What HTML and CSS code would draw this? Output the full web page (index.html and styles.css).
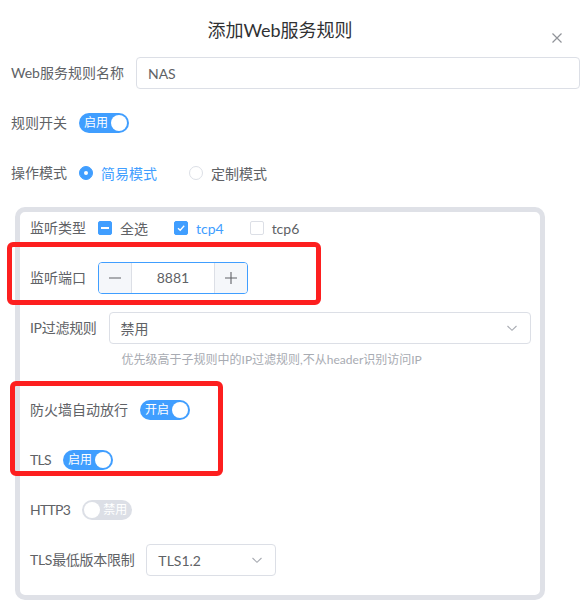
FILE: index.html
```html
<!DOCTYPE html>
<html lang="zh-CN">
<head>
    <meta charset="UTF-8">
    <meta name="viewport" content="width=device-width, initial-scale=1.0">
    <title>添加Web服务规则</title>
    <link rel="stylesheet" href="styles.css">
</head>
<body>
    <div class="dialog">
        <div class="dialog-header">
            <span class="dialog-title">添加Web服务规则</span>
            <button class="dialog-close" type="button" aria-label="关闭">
                <svg width="10" height="10" viewBox="0 0 10 10"><path d="M0.5 0.5L9.5 9.5M9.5 0.5L0.5 9.5" stroke="#909399" stroke-width="1.2" fill="none"/></svg>
            </button>
        </div>

        <form class="form">
            <div class="form-item">
                <label class="form-label">Web服务规则名称</label>
                <div class="form-content">
                    <div class="input"><input type="text" value="NAS"></div>
                </div>
            </div>

            <div class="form-item">
                <label class="form-label">规则开关</label>
                <div class="form-content">
                    <span class="switch is-on"><span class="switch-text">启用</span><span class="switch-knob"></span></span>
                </div>
            </div>

            <div class="form-item">
                <label class="form-label">操作模式</label>
                <div class="form-content">
                    <span class="radio is-checked"><span class="radio-dot"></span><span class="radio-label">简易模式</span></span>
                    <span class="radio"><span class="radio-dot"></span><span class="radio-label">定制模式</span></span>
                </div>
            </div>

            <div class="simple-box">
                <div class="form-item">
                    <label class="form-label">监听类型</label>
                    <div class="form-content">
                        <span class="checkbox is-half"><span class="checkbox-box"></span><span class="checkbox-label">全选</span></span>
                        <span class="checkbox is-checked"><span class="checkbox-box">
                            <svg width="10" height="10" viewBox="0 0 10 10"><path d="M2 5.2L4.2 7.3L8.2 2.8" stroke="#fff" stroke-width="1.3" fill="none"/></svg>
                        </span><span class="checkbox-label">tcp4</span></span>
                        <span class="checkbox"><span class="checkbox-box"></span><span class="checkbox-label">tcp6</span></span>
                    </div>
                </div>

                <div class="form-item">
                    <label class="form-label">监听端口</label>
                    <div class="form-content">
                        <div class="number-input">
                            <span class="number-btn minus">
                                <svg width="12" height="12" viewBox="0 0 12 12"><path d="M0 6H12" stroke="#606266" stroke-width="1.1"/></svg>
                            </span>
                            <span class="number-value">8881</span>
                            <span class="number-btn plus">
                                <svg width="12" height="12" viewBox="0 0 12 12"><path d="M0 6H12M6 0V12" stroke="#606266" stroke-width="1.1"/></svg>
                            </span>
                        </div>
                    </div>
                </div>

                <div class="form-item has-tip">
                    <label class="form-label mixed">IP过滤规则</label>
                    <div class="form-content column">
                        <div class="select wide">
                            <span class="select-value">禁用</span>
                            <svg class="select-arrow" width="12" height="12" viewBox="0 0 12 12"><path d="M1.5 4L6 8.3L10.5 4" stroke="#a8abb2" stroke-width="1.1" fill="none"/></svg>
                        </div>
                        <div class="form-tip">优先级高于子规则中的IP过滤规则,不从header识别访问IP</div>
                    </div>
                </div>

                <div class="form-item">
                    <label class="form-label">防火墙自动放行</label>
                    <div class="form-content">
                        <span class="switch is-on"><span class="switch-text">开启</span><span class="switch-knob"></span></span>
                    </div>
                </div>

                <div class="form-item">
                    <label class="form-label latin">TLS</label>
                    <div class="form-content">
                        <span class="switch is-on"><span class="switch-text">启用</span><span class="switch-knob"></span></span>
                    </div>
                </div>

                <div class="form-item">
                    <label class="form-label latin">HTTP3</label>
                    <div class="form-content">
                        <span class="switch"><span class="switch-text">禁用</span><span class="switch-knob"></span></span>
                    </div>
                </div>

                <div class="form-item">
                    <label class="form-label mixed">TLS最低版本限制</label>
                    <div class="form-content">
                        <div class="select small">
                            <span class="select-value">TLS1.2</span>
                            <svg class="select-arrow" width="12" height="12" viewBox="0 0 12 12"><path d="M1.5 4L6 8.3L10.5 4" stroke="#a8abb2" stroke-width="1.1" fill="none"/></svg>
                        </div>
                    </div>
                </div>
            </div>
        </form>
    </div>

    <!-- highlight frames drawn on top of the form -->
    <div class="mark mark-port"></div>
    <div class="mark mark-tls"></div>
</body>
</html>
```

FILE: styles.css
```css
body {
    margin: 0;
    padding: 0;
    background-color: #fff;
    font-family: Lato, "Noto Sans CJK SC", sans-serif;
    font-size: 14px;
    color: #606266;
    position: relative;
    width: 587px;
    height: 607px;
    overflow: hidden;
}

.dialog {
    width: 587px;
}

.dialog-header {
    position: relative;
    padding: 16px 27px 0 0;
    height: 41px;
    text-align: center;
}
.dialog-title {
    font-size: 18px;
    line-height: 28px;
    color: #303133;
}
.dialog-close {
    position: absolute;
    top: 33px;
    right: 25px;
    width: 10px;
    height: 10px;
    padding: 0;
    border: none;
    background: none;
    display: flex;
}

.form {
    padding: 0 7px 0 11px;
}

.form-item {
    display: flex;
    align-items: flex-start;
    margin-bottom: 18px;
}
.form-item.has-tip {
    margin-bottom: 24px;
}
.form-label {
    flex-shrink: 0;
    line-height: 32px;
    padding-right: 12px;
    color: #606266;
    white-space: nowrap;
}
.form-label.latin {
    letter-spacing: -0.7px;
}
.form-label.mixed {
    letter-spacing: -0.3px;
}
.form-content {
    flex: 1;
    min-height: 32px;
    display: flex;
    align-items: center;
}
.form-content.column {
    flex-direction: column;
    align-items: stretch;
}
.form-tip {
    margin-top: 6px;
    padding-left: 13px;
    font-size: 12px;
    line-height: 20px;
    color: #a8abb2;
}

/* text input */
.input {
    flex: 1;
    height: 32px;
    border: 1px solid #dcdfe6;
    border-radius: 4px;
    box-sizing: border-box;
    display: flex;
    padding: 0 11px;
}
.input input {
    border: none;
    outline: none;
    width: 100%;
    font: inherit;
    color: #606266;
    background: transparent;
    padding: 0;
}

/* switch with inline text */
.switch {
    display: inline-flex;
    align-items: center;
    justify-content: space-between;
    width: 50px;
    height: 20px;
    border-radius: 10px;
    background-color: #409eff;
    box-sizing: border-box;
    padding: 0 2px 0 5px;
}
.switch-text {
    font-size: 12px;
    line-height: 20px;
    color: #fff;
}
.switch-knob {
    width: 16px;
    height: 16px;
    border-radius: 50%;
    background-color: #fff;
}
.switch:not(.is-on) {
    flex-direction: row-reverse;
    padding: 0 5px 0 2px;
    background-color: #dcdfe6;
}

/* radio */
.radio {
    display: inline-flex;
    align-items: center;
    margin-right: 32px;
    cursor: pointer;
}
.radio-dot {
    width: 14px;
    height: 14px;
    border: 1px solid #dcdfe6;
    border-radius: 50%;
    box-sizing: border-box;
    position: relative;
    background: #fff;
}
.radio.is-checked .radio-dot {
    border-color: #409eff;
    background-color: #409eff;
}
.radio.is-checked .radio-dot::after {
    content: "";
    position: absolute;
    left: 4px;
    top: 4px;
    width: 4px;
    height: 4px;
    border-radius: 50%;
    background: #fff;
}
.radio-label {
    padding-left: 8px;
    color: #606266;
}
.radio.is-checked .radio-label {
    color: #409eff;
}

/* checkbox */
.checkbox {
    display: inline-flex;
    align-items: center;
    margin-right: 26px;
}
.checkbox-box {
    width: 14px;
    height: 14px;
    border: 1px solid #dcdfe6;
    border-radius: 2px;
    box-sizing: border-box;
    display: flex;
    align-items: center;
    justify-content: center;
    background: #fff;
}
.checkbox.is-checked .checkbox-box,
.checkbox.is-half .checkbox-box {
    background-color: #409eff;
    border-color: #409eff;
}
.checkbox.is-half .checkbox-box::after {
    content: "";
    width: 8px;
    height: 2px;
    background: #fff;
}
.checkbox-label {
    padding-left: 8px;
    color: #606266;
}
.checkbox.is-checked .checkbox-label {
    color: #409eff;
}

/* the grey framed group */
.simple-box {
    margin: 0 35px 0 4px;
    border: 5px solid #dfe1e7;
    border-radius: 10px;
    padding: 0 9px 1px 10px;
}

/* number input */
.number-input {
    display: flex;
    width: 150px;
    height: 32px;
    border: 1px solid #409eff;
    border-radius: 4px;
    box-sizing: border-box;
    overflow: hidden;
}
.number-btn {
    width: 32px;
    display: flex;
    align-items: center;
    justify-content: center;
    background-color: #f5f7fa;
}
.number-btn.minus {
    border-right: 1px solid #dcdfe6;
}
.number-btn.plus {
    border-left: 1px solid #dcdfe6;
}
.number-value {
    flex: 1;
    text-align: center;
    line-height: 30px;
    color: #606266;
}

/* select */
.select {
    height: 32px;
    border: 1px solid #dcdfe6;
    border-radius: 4px;
    box-sizing: border-box;
    display: flex;
    align-items: center;
    justify-content: space-between;
    padding: 0 12px 0 11px;
}
.select.small {
    width: 130px;
}
.select-value {
    color: #606266;
}

/* red highlight frames */
.mark {
    position: absolute;
    border: 5px solid #fd1f1f;
    border-radius: 6px;
    box-sizing: border-box;
}
.mark-port {
    left: 7px;
    top: 242px;
    width: 314px;
    height: 63px;
}
.mark-tls {
    left: 10px;
    top: 381px;
    width: 213px;
    height: 95px;
}
```
